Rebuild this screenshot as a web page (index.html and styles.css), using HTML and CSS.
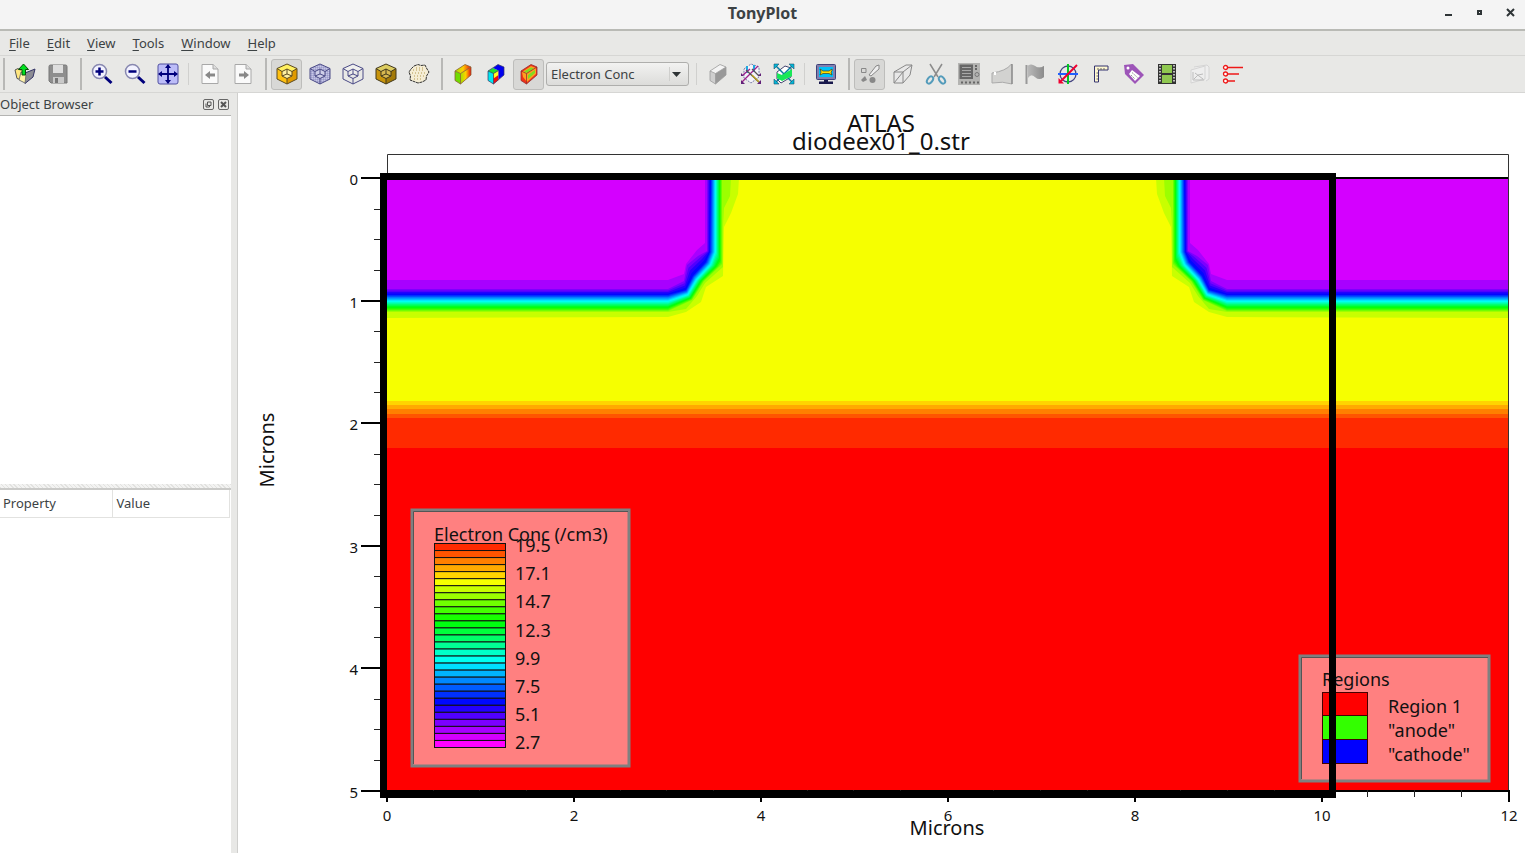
FILE: index.html
```
<!DOCTYPE html>
<html lang="en">
<head>
    <meta charset="UTF-8">
    <meta name="viewport" content="width=device-width, initial-scale=1.0">
    <title>TonyPlot</title>
    <link rel="stylesheet" href="styles.css">
</head>
<body>
    <svg class="defs" aria-hidden="true">
        <symbol id="cube" viewBox="0 0 22 22">
            <path class="face-left" d="M1 5.500 11 10.500V21L1 16z"/>
            <path class="face-right" d="M21 5.500 11 10.500V21L21 16z"/>
            <path class="face-top" d="M11 1 21 5.500 11 10.500 1 5.500z"/>
            <path class="face-hole" d="M11 6 16 8.500V13L11 15.500 6 13V8.500z"/>
            <path class="cube-line" d="M11 1 21 5.500V16L11 21 1 16V5.500zM1 5.500 6 8.500M21 5.500 16 8.500M11 15.500V21M11 6 16 8.500V13L11 15.500 6 13V8.500zM11 6v5M11 11 6 13M11 11l5 2"/>
        </symbol>
        <symbol id="slab" viewBox="0 0 22 22">
            <path class="face-front" d="M3 8 8.500 10.500V21L3 17.500z"/>
            <path class="face-side" d="M8.500 10.500 19 4V12L8.500 21z"/>
            <path class="face-top" d="M3 8 13 1.500 19 4 8.500 10.500z"/>
            <path class="slab-line" d="M3 8 13 1.500 19 4V12L8.500 21 3 17.500zM3 8 8.500 10.500 19 4M8.500 10.500V21"/>
        </symbol>
        <linearGradient id="heat"><stop offset="0" stop-color="#a0e000"/><stop offset=".5" stop-color="#ffd000"/><stop offset="1" stop-color="#e81010"/></linearGradient>
        <linearGradient id="grey"><stop offset="0" stop-color="#eee"/><stop offset="1" stop-color="#777"/></linearGradient>
        <pattern id="mesh" width="2" height="2" patternUnits="userSpaceOnUse"><path d="M0 0H2V2H0z" fill="#c6c6e6"/><path d="M0 0H2M0 0V2" stroke="#6666a8" stroke-width=".5"/></pattern>
    </svg>

    <header class="titlebar">
        <h1>TonyPlot</h1>
        <div class="window-buttons">
            <button aria-label="Minimize"><svg viewBox="0 0 9 9"><path d="M1 7h7" stroke="#2e3436" stroke-width="2"/></svg></button>
            <button aria-label="Maximize"><svg viewBox="0 0 9 9"><path d="M3 3h3v3H3z" fill="none" stroke="#2e3436" stroke-width="2"/></svg></button>
            <button aria-label="Close"><svg viewBox="0 0 9 9"><path d="M1 1 8 8M8 1 1 8" stroke="#2e3436" stroke-width="2"/></svg></button>
        </div>
    </header>

    <nav class="menubar">
        <button><u>F</u>ile</button>
        <button><u>E</u>dit</button>
        <button><u>V</u>iew</button>
        <button><u>T</u>ools</button>
        <button><u>W</u>indow</button>
        <button><u>H</u>elp</button>
    </nav>

    <div class="toolbar">
        <div class="group">
            <button class="tool" aria-label="Open"><svg viewBox="0 0 22 22"><path d="M1 7 4 5.500 6 7 9 6 11 18 3 15.500z" fill="#ffe680" stroke="#555"/><path d="M11 10 21 6 19 14 11 20.500z" fill="#8c8c94" stroke="#333366"/><path d="M5 17 11 20 12 12 7 9z" fill="#fff3a8" stroke="#777"/><path d="M9.500 1 14.500 6.500H11.500V12H8V6.500H4.500z" fill="#00e020" stroke="#085008"/></svg></button>
            <button class="tool" aria-label="Save"><svg viewBox="0 0 22 22"><path d="M2 3.500Q2 2 3.500 2H18.500Q20 2 20 3.500V20H4L2 18z" fill="#8e8e8e" stroke="#777"/><path d="M6 2H16V10H6z" fill="#dedede"/><path d="M6 14H17V20H6z" fill="#c9c9c9"/><path d="M8 15H11V20H8z" fill="#777"/></svg></button>
        </div>
        <div class="group">
            <button class="tool" aria-label="Zoom in"><svg viewBox="0 0 22 22"><circle cx="8.500" cy="8.500" r="7" fill="#f2f2ff" stroke="#8888b0" stroke-width="1.500"/><path d="M4.500 8.500h8M8.500 4.500v8" stroke="#00007c" stroke-width="2.500"/><path d="M14 14 20.500 20" stroke="#00007c" stroke-width="3"/></svg></button>
            <button class="tool" aria-label="Zoom out"><svg viewBox="0 0 22 22"><circle cx="8.500" cy="8.500" r="7" fill="#f2f2ff" stroke="#8888b0" stroke-width="1.500"/><path d="M4.500 8.500h8" stroke="#00007c" stroke-width="2.500"/><path d="M14 14 20.500 20" stroke="#00007c" stroke-width="3"/></svg></button>
            <button class="tool" aria-label="Fit to window"><svg viewBox="0 0 22 22"><rect x="1" y="1" width="20" height="20" rx="2" fill="#bcbcf8" stroke="#5050a0"/><path d="M2 11H20M11 2V20" stroke="#00007c" stroke-width="1.800"/><path d="M11 1 14 5H8zM11 21 14 17H8zM1 11 5 8V14zM21 11 17 8V14z" fill="#00007c"/></svg></button>
            <span class="thin"></span>
            <button class="tool" aria-label="Previous"><svg viewBox="0 0 22 22"><path d="M3 1.500H14L19 6V20.500H3z" fill="#fafafa" stroke="#a8a8a8"/><path d="M14 1.500V6H19" fill="#ddd" stroke="#a8a8a8"/><path d="M6 12 11 8V10.500H16V13.500H11V16z" fill="#888"/></svg></button>
            <button class="tool" aria-label="Next"><svg viewBox="0 0 22 22"><path d="M3 1.500H14L19 6V20.500H3z" fill="#fafafa" stroke="#a8a8a8"/><path d="M14 1.500V6H19" fill="#ddd" stroke="#a8a8a8"/><path d="M17 12 12 8V10.500H7V13.500H12V16z" fill="#888"/></svg></button>
        </div>
        <div class="group">
            <button class="tool pressed cube-gold" aria-label="Solid"><svg><use href="#cube"/></svg></button>
            <button class="tool cube-mesh" aria-label="Transparent mesh"><svg><use href="#cube"/></svg></button>
            <button class="tool cube-wire" aria-label="Wireframe"><svg><use href="#cube"/></svg></button>
            <button class="tool cube-dark" aria-label="Solid with mesh"><svg><use href="#cube"/></svg></button>
            <button class="tool" aria-label="Points"><svg viewBox="0 0 22 22"><path d="M6 3 10 1.500 13 2.500 17 2 19 6 21 9 18.500 13 18 17 14 19 10 20 6 18.500 2 17 2.500 13 1 9 3 6z" fill="#f5edd4" stroke="#333" stroke-dasharray="3 .6"/><path d="M5 7h12M4 10h14M6 13h11M6 16h9M8 5h8" stroke="#b39a50" stroke-dasharray="1 2"/></svg></button>
        </div>
        <div class="group">
            <button class="tool slab-heat" aria-label="Contour"><svg><use href="#slab"/></svg></button>
            <button class="tool" aria-label="Regions"><svg viewBox="0 0 22 22"><path d="M3 8 8.500 10.500V21L3 17.500z" fill="#00e8f0"/><path d="M8.500 10.500 13.500 7.500V17L8.500 21z" fill="#f01010"/><path d="M8.500 10.500 13.500 7.500V12L8.500 15.500z" fill="#ffff20"/><path d="M3 8 8 5 13.500 7.500 8.500 10.500z" fill="#20e030"/><path d="M8 5 13 1.500 19 4V12L13.500 16.500V7.500z" fill="#0000f0"/><path d="M3 8 13 1.500 19 4V12L8.500 21 3 17.500zM3 8 8.500 10.500 13.500 7.500M8.500 10.500V21" fill="none" stroke="#333366" stroke-width=".7"/></svg></button>
            <button class="tool pressed" aria-label="Contour lines"><svg viewBox="0 0 22 22"><path d="M3 8 13 1.500 19 4V12L8.500 21 3 17.500z" fill="#f03018"/><path d="M4 9 13 3 18 5V11L9 19 5 14z" fill="#ffa020"/><path d="M6 8.500 13 4.500 16 5.500 9 10zM10 12 17 7V10L10 16z" fill="#80dc20"/><path d="M3 8 13 1.500 19 4V12L8.500 21 3 17.500zM3 8 8.500 10.500 19 4M8.500 10.500V21" fill="none" stroke="#963030" stroke-width=".8"/></svg></button>
            <div class="combo">
                <select aria-label="Quantity"><option>Electron Conc</option></select>
                <svg viewBox="0 0 20 20"><path d="M.5 3V17" stroke="#cfcfcd"/><path d="M3 8H12L7.500 13z" fill="#2e3436"/></svg>
            </div>
            <span class="thin"></span>
            <button class="tool slab-grey" aria-label="Surface"><svg><use href="#slab"/></svg></button>
            <button class="tool" aria-label="Vectors"><svg viewBox="0 0 22 22"><path d="M4 6 11 1 19 4V14L11 20 4 15z" fill="#f4f4fa" stroke="#777aa8" stroke-dasharray="2 1"/><path d="M7 3V10M14 2V9" stroke="#20a8e0" stroke-width="2"/><path d="M2 19 18 3M3 12 10 6" stroke="#a0208c" stroke-width="1.300"/><path d="M6 7 20 20M12 6 19 13" stroke="#555" stroke-width="1.300"/><path d="M12 12 19 19" stroke="#b8a020" stroke-width="1.500"/><path d="M1 17V21H5zM17 21H21V17zM1 10V13H4zM18 13H21V10z" fill="#602078"/></svg></button>
            <button class="tool" aria-label="Streamlines"><svg viewBox="0 0 22 22"><path d="M4 9 12 3 18 5V14L8 20 4 16z" fill="#fff" stroke="#444470"/><path d="M2 2 20 20M20 2 2 20" stroke="#087ca0" stroke-width="1.500"/><path d="M1 1H6L1 6zM21 1V6L16 1zM1 21V16L6 21zM21 21H16L21 16z" fill="#00b8d8" stroke="#205070" stroke-width=".6"/><path d="M4 10 9 12 19 6V13L9 18 4 15z" fill="#18e858"/></svg></button>
            <span class="thin"></span>
            <button class="tool" aria-label="Display settings"><svg viewBox="0 0 22 22"><rect x="1.500" y="1.500" width="19" height="15" rx="1" fill="#8080b0" stroke="#404078"/><path d="M4 4H18V14H4z" fill="#00c0f8"/><path d="M5 6 8 8H14L17 6V8L16 9 17 12 14 10.500H8L5 12 6 9z" fill="#ffe000" stroke="#404020" stroke-width=".7"/><path d="M9 17H13V18.500H18V21H4V18.500H9z" fill="#18184c"/></svg></button>
        </div>
        <div class="group">
            <button class="tool pressed" aria-label="Annotate"><svg viewBox="0 0 22 22"><path d="M2.500 5.500H7V9.500H2.500z" fill="none" stroke="#888"/><circle cx="13.500" cy="17" r="3" fill="#888"/><path d="M2 17 6 13 8 17 4 19z" fill="#888"/><path d="M10 12 17 3 20 2 20 6 12 13z" fill="#eee" stroke="#888"/></svg></button>
            <button class="tool" aria-label="Cube"><svg viewBox="0 0 22 22"><path d="M2 9 14 2 20 2 18 12 11 20H2zM2 9H11V20M11 9 20 2M2 20 11 9" fill="#e8e8e8" stroke="#888"/></svg></button>
            <button class="tool" aria-label="Cutline"><svg viewBox="0 0 22 22"><path d="M5 1 13 14M17 1 9 14" stroke="#8c8c8c" stroke-width="1.500"/><ellipse cx="5" cy="17" rx="2.500" ry="4" transform="rotate(35 5 17)" fill="none" stroke="#559cbb" stroke-width="2"/><ellipse cx="17" cy="17" rx="2.500" ry="4" transform="rotate(-35 17 17)" fill="none" stroke="#559cbb" stroke-width="2"/></svg></button>
            <button class="tool" aria-label="Probe"><svg viewBox="0 0 22 22"><path d="M0 0H22V22H0z" fill="#b4b4b2"/><path d="M1.500 1.500H15V16H1.500z" fill="#666"/><path d="M4 4.500H13M4 7.500H13M4 10.500H13M4 13.500H13" stroke="#a8a8a8"/><path d="M17 3H21M17 6H21M3 19.500H21" stroke="#666" stroke-width="2" stroke-dasharray="2 2"/><circle cx="19" cy="11.500" r="2" fill="none" stroke="#777"/></svg></button>
            <button class="tool" aria-label="Horn"><svg viewBox="0 0 22 22"><path d="M1 10Q15 8 20 1.500H21V21Q12 18 1 20z" fill="#d2d2d0" stroke="#aaa"/><path d="M4 9V12" stroke="#fff" stroke-width="2"/><path d="M21 1V21" stroke="#777"/></svg></button>
            <button class="tool" aria-label="Flag"><svg viewBox="0 0 22 22"><path d="M2.500 2V21" stroke="#999" stroke-width="2"/><path d="M3 3Q7 0 11 3T20 3V14Q15 18 11 14T4 15z" fill="url(#grey)"/><path d="M3 3Q7 0 11 3T20 3V14Q15 18 11 14T4 15z" fill="#999" opacity=".6"/></svg></button>
            <button class="tool" aria-label="Axes"><svg viewBox="0 0 22 22"><circle cx="11" cy="11" r="8" fill="none" stroke="#444480" stroke-width="1.300"/><path d="M11 1V21" stroke="#00c820" stroke-width="2"/><path d="M1 11H21" stroke="#2060ff" stroke-width="2"/><path d="M4 18 20 2" stroke="#f00030" stroke-width="2"/><path d="M1.500 15V20.500H7z" fill="#f00030"/></svg></button>
            <button class="tool" aria-label="Ruler"><svg viewBox="0 0 22 22"><path d="M4.500 3H18V7H8.500V19H4.500z" fill="#fff8d0" stroke="#333370"/><path d="M8 5V7M11 5V7M14 5V7M6.500 10H8M6.500 13H8M6.500 16H8" stroke="#666"/></svg></button>
            <button class="tool" aria-label="Labels"><svg viewBox="0 0 22 22"><path d="M1 2 10 1 21 12 12 21 2 11z" fill="#9d55b8"/><path d="M9 7 17 13 12 18 6 11z" fill="#fff"/><path d="M9 9.500 14.500 14.500M8 12 12 16" stroke="#999" stroke-dasharray="2 1"/><circle cx="5" cy="5" r="1.500" fill="#fff"/></svg></button>
            <button class="tool" aria-label="Movie"><svg viewBox="0 0 22 22"><path d="M2 1H20V21H2z" fill="#333"/><path d="M6 2H16V10H6zM6 12H16V20H6z" fill="#8fc850"/><path d="M4 2V20M18 2V20" stroke="#eee" stroke-width="1.500" stroke-dasharray="1.500 1.500"/></svg></button>
            <button class="tool" aria-label="Overlay"><svg viewBox="0 0 22 22"><path d="M2 7 16 3V16L2 20zM5 4 18 2 20 4V16L17 18" fill="#eee" stroke="#d4d4d4"/><path d="M4 9V17H15M5 16 9 12 14 11M6 10 14 16" fill="none" stroke="#bbb"/></svg></button>
            <button class="tool" aria-label="Legend"><svg viewBox="0 0 22 22"><path d="M5 4.500H21M5 11H17M5 18H13" stroke="#ee1818" stroke-width="1.300"/><g fill="#fff" stroke="#ee1818" stroke-width="1.300"><circle cx="3.500" cy="4.500" r="2"/><circle cx="3.500" cy="11" r="2"/><circle cx="3.500" cy="18" r="2"/></g></svg></button>
        </div>
    </div>

    <main class="workspace">
        <aside class="dock">
            <div class="dock-title">
                <h2>Object Browser</h2>
                <button aria-label="Float"><svg viewBox="0 0 11 11"><rect x=".5" y=".5" width="10" height="10" rx="1.500" fill="none" stroke="#666"/><path d="M4.500 3H8V6.500H4.500zM3 4.500V8H6.500V6.500" fill="none" stroke="#555"/></svg></button>
                <button aria-label="Close dock"><svg viewBox="0 0 11 11"><rect x=".5" y=".5" width="10" height="10" rx="1.500" fill="none" stroke="#666"/><path d="M3 3 8 8M8 3 3 8" stroke="#555" stroke-width="2"/></svg></button>
            </div>
            <div class="tree"></div>
            <div class="splitter"></div>
            <div class="properties">
                <table>
                    <thead><tr><th>Property</th><th>Value</th></tr></thead>
                </table>
            </div>
        </aside>
        <svg class="plot" viewBox="238 93 1287 760" role="img" aria-label="Electron concentration plot">
            <g class="title">
                <text x="881" y="132">ATLAS</text>
                <text x="881" y="150">diodeex01_0.str</text>
            </g>
            <g id="contours"></g>
            <path class="outline" d="M387.500 178V154.500H1508.500V790"/>
            <path class="top-edge" d="M387 178H1508M387 791H1509"/>
            <g id="ticks"></g>
            <text class="axis-name" x="947" y="835">Microns</text>
            <text class="axis-name" transform="translate(274 450) rotate(-90)">Microns</text>
            <g id="levels">
                <rect class="box" x="412" y="510" width="217" height="256"/>
                <path class="box-edge" d="M413.500 764V511.500H628"/>
                <text x="434" y="541">Electron Conc (/cm3)</text>
            </g>
            <g class="regions">
                <rect class="box" x="1300" y="656" width="189" height="125"/>
                <path class="box-edge" d="M1301.500 779V657.500H1488"/>
                <text x="1322" y="686">Regions</text>
                <rect class="key" x="1322.500" y="692.500" width="45" height="23" fill="#ff0000"/>
                <rect class="key" x="1322.500" y="715.500" width="45" height="24" fill="#33ff00"/>
                <rect class="key" x="1322.500" y="739.500" width="45" height="24" fill="#0000ff"/>
                <text x="1388" y="713">Region 1</text>
                <text x="1388" y="737">"anode"</text>
                <text x="1388" y="761">"cathode"</text>
            </g>
            <rect class="frame" x="383.500" y="176.500" width="949" height="618"/>
        </svg>
    </main>
    <script src="plot.js"></script>
</body>
</html>
```
FILE: styles.css
```
* {
    box-sizing: border-box;
}
body {
    display: flex;
    flex-direction: column;
    height: 100vh;
    margin: 0;
    background: #e8e8e6;
    color: #3c4244;
    font-family: "Noto Sans", sans-serif;
    font-size: 13px;
    overflow: hidden;
}
button {
    padding: 0;
    border: 0;
    background: none;
    color: inherit;
    font: inherit;
}
.defs {
    position: absolute;
    width: 0;
    height: 0;
}

/* title bar and menu */
.titlebar {
    display: grid;
    grid-template-columns: 1fr auto 1fr;
    align-items: center;
    height: 31px;
    padding-bottom: 4px;
    background: #f4f4f4;
    border-bottom: 2px solid #b9bab5;
}
.titlebar h1 {
    grid-column: 2;
    margin: 0;
    font-size: 16px;
    line-height: 24px;
}
.window-buttons {
    display: flex;
    justify-content: flex-end;
    gap: 22px;
    padding-right: 10px;
}
.window-buttons button {
    display: flex;
}
.window-buttons svg {
    width: 9px;
    height: 9px;
}
.menubar {
    display: flex;
    gap: 17px;
    height: 25px;
    padding-left: 9px;
    border-bottom: 1px solid #d6d6d4;
}
.menubar u {
    text-underline-offset: 2px;
}

/* toolbar */
.toolbar {
    display: flex;
    gap: 7px;
    height: 37px;
    padding-left: 3px;
    border-bottom: 1px solid #d6d6d4;
}
.group {
    display: flex;
    align-items: center;
    gap: 2px;
}
.group::before {
    content: "";
    width: 2px;
    height: 32px;
    margin-right: 2px;
    background: #b8b8b6;
}
.tool {
    display: grid;
    place-items: center;
    width: 31px;
    height: 31px;
    border: 1px solid transparent;
    border-radius: 3px;
}
.tool.pressed {
    background: #d8d8d6;
    border-color: #bdbdbb;
}
.tool svg {
    width: 22px;
    height: 22px;
}
.thin {
    width: 1px;
    height: 22px;
    margin: 0 3px;
    background: #d0d0ce;
}
.combo {
    display: grid;
    align-items: center;
    justify-items: end;
    width: 143px;
    margin-right: 2px;
}
.combo select {
    grid-area: 1 / 1;
    width: 100%;
    height: 24px;
    padding: 0 4px;
    appearance: none;
    border: 1px solid #aeaeac;
    border-radius: 3px;
    background: linear-gradient(#f2f2f1, #dcdcda);
    color: #3c4244;
    font: inherit;
}
.combo svg {
    grid-area: 1 / 1;
    width: 20px;
    height: 20px;
    pointer-events: none;
}
.face-left, .face-front { fill: var(--left); }
.face-right, .face-side { fill: var(--right); }
.face-top { fill: var(--top); }
.face-hole { fill: var(--hole); }
.cube-line {
    fill: none;
    stroke: var(--line, #4a4a86);
}
.slab-line {
    fill: none;
    stroke: var(--line);
    stroke-width: .8;
}
.cube-gold { --left: #ffc010; --right: #e09a00; --top: #fff060; --hole: #fff0a0; --line: #5c4a20; }
.cube-mesh { --left: url(#mesh); --right: url(#mesh); --top: url(#mesh); --hole: #cfcfe8; }
.cube-wire { --left: none; --right: none; --top: #f0f0ee; --hole: none; }
.cube-dark { --left: #c8940c; --right: #a47a08; --top: #dccc60; --hole: #d8b850; --line: #42381c; }
.slab-heat { --left: #70dc00; --right: url(#heat); --top: url(#heat); --line: #8a6030; }
.slab-grey { --left: #cfcfcf; --right: #999; --top: #f4f4f4; --line: #9a9a9a; }

/* dock */
.workspace {
    display: flex;
    flex: 1;
    min-height: 0;
}
.dock {
    display: flex;
    flex-direction: column;
    width: 231px;
}
.dock-title {
    display: flex;
    align-items: center;
    gap: 4px;
    height: 23px;
    padding-right: 2px;
    border-bottom: 1px solid #b4b4b2;
}
.dock-title h2 {
    flex: 1;
    margin: 0;
    font-size: 13px;
    font-weight: normal;
}
.dock-title button {
    display: flex;
}
.dock-title svg {
    width: 11px;
    height: 11px;
}
.tree {
    flex: 368;
    background: #fff;
}
.splitter {
    height: 6px;
    background: repeating-linear-gradient(45deg, #e2e2e0 0 1px, #f3f3f2 1px 3px);
    border-bottom: 2px solid #cacac8;
}
.properties {
    flex: 363;
    background: #fff;
}
.properties table {
    width: 230px;
    border-collapse: collapse;
    table-layout: fixed;
}
.properties th {
    height: 27px;
    padding: 0 4px;
    border-right: 1px solid #e2e2e0;
    border-bottom: 1px solid #e2e2e0;
    font-weight: normal;
    text-align: left;
}
.properties th:first-child {
    width: 112px;
    padding-left: 3px;
}

/* plot */
.plot {
    flex: 1;
    min-width: 0;
    margin-left: 6px;
    border-left: 1px solid #cfcfcd;
    background: #fff;
    font-size: 18px;
    fill: #111;
}
.title {
    font-size: 24px;
    text-anchor: middle;
}
.axis-name {
    font-size: 20px;
    text-anchor: middle;
}
.outline {
    fill: none;
    stroke: #333;
}
.top-edge {
    stroke: #000;
    stroke-width: 2;
}
.tick-label {
    font-size: 15px;
}
.major {
    stroke: #000;
    stroke-width: 2;
}
.minor {
    stroke: #222;
}
.box {
    fill: #ff8080;
    stroke: #808080;
    stroke-width: 3;
}
.box-edge {
    fill: none;
    stroke: #555;
}
.key {
    stroke: #400;
}
.frame {
    fill: none;
    stroke: #000;
    stroke-width: 7;
}
```
FILE: plot.js
```
const NS = "http://www.w3.org/2000/svg";

function add(parent, name, attrs, text) {
    const el = document.createElementNS(NS, name);
    for (const key in attrs) el.setAttribute(key, attrs[key]);
    if (text !== undefined) el.textContent = text;
    parent.appendChild(el);
}

const colors = [
    "#ff2a00", "#ff5500", "#ff8000", "#ffaa00", "#ffd400", "#f6ff00", "#c8ff00", "#9cff00",
    "#70ff00", "#44ff00", "#18ff00", "#00ff10", "#00ff3c", "#00ff68", "#00ff94", "#00ffc8",
    "#00fff0", "#00e0ff", "#00b4ff", "#0088ff", "#005cff", "#0030ff", "#0008ff", "#2400ff",
    "#5000ff", "#7c00ff", "#a800ff", "#d400ff", "#ff00ff"
];

// horizontal layers, from the surface down
const contours = document.getElementById("contours");
const layers = [[178, "#f6ff00"], [401, "#ffd400"], [405, "#ffaa00"], [409, "#ff8000"], [414, "#ff5500"], [418, "#ff2a00"], [448, "#ff0000"]];
layers.forEach(([y, fill]) => add(contours, "rect", { x: 387, y, width: 1121, height: 790 - y, fill }));

// contour lines of the left well, the right one is its mirror
const outer = [
    [6, [[739, 178], [738, 194], [731, 213], [724, 227], [723, 276], [706, 287], [701, 302], [686, 312], [668, 317], [387, 318]]],
    [7, [[731, 178], [730, 196], [724, 208], [723, 227], [723, 267], [705, 283], [697, 296], [686, 309], [668, 312], [387, 312]]]
];
const knots = [
    [8, [[722, 178], [722, 264], [719, 267], [704, 281], [692, 300], [668, 311], [387, 311]]],
    [16, [[716, 178], [716, 252], [711, 265], [697, 280], [688, 295], [668, 302], [387, 302]]],
    [22, [[711, 178], [710, 252], [706, 262], [693, 276], [686, 290], [668, 295], [387, 295]]],
    [26, [[707, 178], [707, 251], [698, 256], [687, 265], [684, 281], [668, 289], [387, 289]]],
    [27, [[705, 178], [705, 243], [697, 250], [686, 264], [684, 274], [668, 280], [387, 280]]]
];

function drawWell(points, fill) {
    [false, true].forEach(mirror => {
        const line = points.map(([x, y]) => (mirror ? 1895 - x : x) + "," + y);
        line.push((mirror ? 1508 : 387) + ",178");
        add(contours, "polygon", { points: line.join(" "), fill });
    });
}

outer.forEach(([level, points]) => drawWell(points, colors[level]));
for (let k = 0; k < knots.length; k++) {
    const [from, a] = knots[k];
    const [to, b] = knots[k + 1] || [from + 1, a];
    for (let level = from; level < to; level++) {
        const t = (level - from) / (to - from);
        drawWell(a.map(([x, y], i) => [x + (b[i][0] - x) * t, y + (b[i][1] - y) * t]), colors[level]);
    }
}

// axes
const ticks = document.getElementById("ticks");
for (let i = 0; i <= 20; i++) {
    const y = Math.round(178 + i * 612.5 / 20);
    const major = i % 4 === 0;
    add(ticks, "path", { class: major ? "major" : "minor", d: `M${major ? 361 : 374} ${major ? y : y + 0.5}H384` });
    if (major) add(ticks, "text", { class: "tick-label", x: 358, y: y + 7, "text-anchor": "end" }, i / 4);
}
for (let i = 0; i <= 24; i++) {
    const x = Math.round(387 + i * 1121.5 / 24);
    const major = i % 4 === 0;
    add(ticks, "path", { class: major ? "major" : "minor", d: `M${major ? x : x - 0.5} 790V${major ? 802 : 797}` });
    if (major) add(ticks, "text", { class: "tick-label", x, y: 821, "text-anchor": "middle" }, i / 2);
}

// colour scale
const levels = document.getElementById("levels");
const step = 204 / colors.length;
colors.forEach((fill, i) => {
    add(levels, "rect", { x: 434.5, y: 543.5 + i * step, width: 71, height: step, fill, stroke: "#111" });
});
["19.5", "17.1", "14.7", "12.3", "9.9", "7.5", "5.1", "2.7"].forEach((value, i) => {
    add(levels, "text", { x: 515, y: 552 + Math.round(i * 28.2) }, value);
});
```
